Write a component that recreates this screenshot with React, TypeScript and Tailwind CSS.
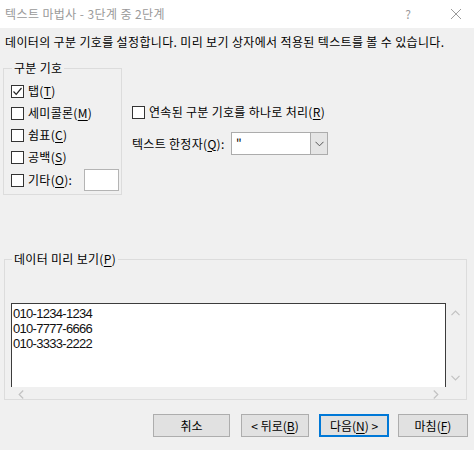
import React from "react";

const KR = "font-['Malgun_Gothic','Noto_Sans_CJK_KR',sans-serif]";

function U({ children }: { children: React.ReactNode }) {
  return <span className="underline underline-offset-2">{children}</span>;
}

function Box({ checked = false }: { checked?: boolean }) {
  return (
    <span className="w-[13px] h-[13px] border border-[#333] bg-white flex items-center justify-center shrink-0">
      {checked && (
        <svg width="11" height="11" viewBox="0 0 11 11" fill="none">
          <path d="M1.5 5.5 L4.2 8.3 L9.5 2" stroke="#222" strokeWidth="1.2" />
        </svg>
      )}
    </span>
  );
}

function Check({ checked, children }: { checked?: boolean; children: React.ReactNode }) {
  return (
    <div className="flex items-center gap-[4px] h-[22px] whitespace-nowrap">
      <Box checked={checked} />
      <span>{children}</span>
    </div>
  );
}

function Button({ children, className }: { children: React.ReactNode; className: string }) {
  return (
    <button
      className={
        "h-[23px] bg-[#e1e1e1] flex items-center justify-center text-[12px] whitespace-nowrap " + className
      }
    >
      {children}
    </button>
  );
}

export default function App() {
  return (
    <div className={`w-[474px] h-[450px] bg-[#f0f0f0] text-[12px] text-black leading-[16px] ${KR}`}>
      {/* Title bar */}
      <div className="h-[28px] bg-white flex items-center pl-[5px] pr-[12px] text-[#9a9a9a]">
        <span className="flex-1 tracking-[0.4px]">텍스트 마법사 - 3단계 중 2단계</span>
        <span className="w-[12px] text-center mr-[36px]">?</span>
        <svg width="12" height="12" viewBox="0 0 12 12">
          <path d="M1 1 L11 11 M11 1 L1 11" stroke="#9a9a9a" strokeWidth="1" />
        </svg>
      </div>

      <div className="pt-[6px] pl-[5px] tracking-[0.35px] whitespace-nowrap">
        데이터의 구분 기호를 설정합니다. 미리 보기 상자에서 적용된 텍스트를 볼 수 있습니다.
      </div>

      <div className="flex mt-[10px]">
        <fieldset className="ml-[3px] w-[119px] h-[135px] shrink-0 border border-[#dcdcdc] pl-[7px] pt-[4px] tracking-[0.3px]">
          <legend className="ml-[1px] px-[2px]">구분 기호</legend>
          <Check checked>
            탭(<U>T</U>)
          </Check>
          <Check>
            세미콜론(<U>M</U>)
          </Check>
          <Check>
            쉼표(<U>C</U>)
          </Check>
          <Check>
            공백(<U>S</U>)
          </Check>
          <div className="flex items-center gap-[4px] h-[24px] whitespace-nowrap">
            <Box />
            <span className="shrink-0">
              기타(<U>O</U>):
            </span>
            <span className="ml-[8px] w-[35px] h-[22px] shrink-0 bg-white border border-[#b4b4b4]" />
          </div>
        </fieldset>

        <div className="ml-[10px] pt-[44px] tracking-[0.3px] whitespace-nowrap">
          <div className="flex items-center gap-[4px]">
            <Box />
            <span>
              연속된 구분 기호를 하나로 처리(<U>R</U>)
            </span>
          </div>
          <div className="flex items-center mt-[12px]">
            <span className="w-[99px]">
              텍스트 한정자(<U>Q</U>):
            </span>
            <div className="w-[97px] h-[23px] bg-white border border-[#acacac] flex">
              <span className="flex-1 pl-[4px] leading-[20px]">"</span>
              <span className="w-[17px] bg-[#e5e5e5] border-l border-[#acacac] flex items-center justify-center">
                <svg width="9" height="6" viewBox="0 0 9 6" fill="none">
                  <path d="M0.5 0.8 L4.5 4.8 L8.5 0.8" stroke="#555" strokeWidth="1" />
                </svg>
              </span>
            </div>
          </div>
        </div>
      </div>

      {/* Preview */}
      <fieldset className="ml-[4px] mt-[56px] w-[463px] h-[149px] border border-[#dcdcdc] pl-[6px] pt-[36px]">
        <legend className="ml-[1px] px-[2px] tracking-[0.3px]">
          데이터 미리 보기(<U>P</U>)
        </legend>
        <div className="flex">
          <div className="w-[435px] h-[84px] bg-white border-l border-t border-r border-[#3c3c3c] pl-[1px] pt-[2px] font-['Liberation_Sans',sans-serif] text-[13px] leading-[15px] tracking-[-0.7px] text-[#111]">
            <div>010-1234-1234</div>
            <div>010-7777-6666</div>
            <div>010-3333-2222</div>
          </div>
          <div className="w-[19px] h-[84px] flex flex-col items-center justify-between pt-[7px] pb-[6px]">
            <svg width="9" height="6" viewBox="0 0 9 6" fill="none">
              <path d="M0.5 5.2 L4.5 1.2 L8.5 5.2" stroke="#c2c2c2" strokeWidth="1.2" />
            </svg>
            <svg width="9" height="6" viewBox="0 0 9 6" fill="none">
              <path d="M0.5 0.8 L4.5 4.8 L8.5 0.8" stroke="#c2c2c2" strokeWidth="1.2" />
            </svg>
          </div>
        </div>
        <div className="w-[435px] h-[14px] flex items-center justify-between px-[7px]">
          <svg width="6" height="9" viewBox="0 0 6 9" fill="none">
            <path d="M5.2 0.5 L1.2 4.5 L5.2 8.5" stroke="#c2c2c2" strokeWidth="1.2" />
          </svg>
          <svg width="6" height="9" viewBox="0 0 6 9" fill="none">
            <path d="M0.8 0.5 L4.8 4.5 L0.8 8.5" stroke="#c2c2c2" strokeWidth="1.2" />
          </svg>
        </div>
      </fieldset>

      {/* Buttons */}
      <div className="flex mt-[14px] pl-[153px]">
        <Button className="w-[77px] border border-[#adadad]">취소</Button>
        <Button className="ml-[11px] w-[68px] border border-[#adadad]">
          &lt; 뒤로(<U>B</U>)
        </Button>
        <Button className="ml-[10px] w-[70px] border-2 border-[#0078d7]">
          다음(<U>N</U>) &gt;
        </Button>
        <Button className="ml-[9px] w-[70px] border border-[#adadad]">
          마침(<U>F</U>)
        </Button>
      </div>
    </div>
  );
}
